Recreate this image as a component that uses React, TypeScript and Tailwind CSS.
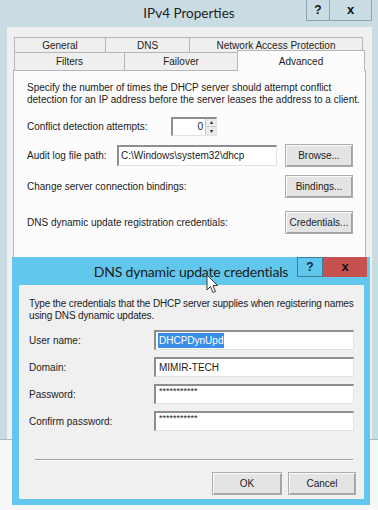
import React from 'react';

const WinButton: React.FC<{ label: string; className?: string }> = ({ label, className = '' }) => (
  <button
    className={`flex items-center justify-center bg-[#e4e4e4] border border-[#acacac] shadow-[inset_1px_1px_0_#fbfbfb,inset_-1px_-1px_0_#a2a2a2] text-[10px] text-[#1b1b1b] ${className}`}
  >
    {label}
  </button>
);

const TextBox: React.FC<{ className?: string; children?: React.ReactNode }> = ({ className = '', children }) => (
  <div
    className={`flex items-center bg-white border-t-2 border-l-2 border-r border-b border-t-[#8e8e8e] border-l-[#8e8e8e] border-r-[#e2e2e2] border-b-[#e2e2e2] pl-[1px] ${className}`}
  >
    {children}
  </div>
);

const Tab: React.FC<{ label: string; className?: string }> = ({ label, className = '' }) => (
  <div className={`flex items-center justify-center border-t border-l border-[#b6b6b6] bg-[#efefef] ${className}`}>
    {label}
  </div>
);

const Cursor = () => (
  <svg width="13" height="20" viewBox="0 0 13 20" className="absolute left-[206px] top-[274px]">
    <path d="M1 1 L1 16 L4.5 12.5 L7 18.5 L9.5 17.5 L7 11.5 L11.5 11.5 Z" fill="#ffffff" stroke="#3a3a3a" strokeWidth="1" strokeLinejoin="round" />
  </svg>
);

const App: React.FC = () => {
  return (
    <div className="relative w-[378px] h-[510px] overflow-hidden bg-[#f7f7f7] font-['Liberation_Sans',Arial,sans-serif] text-[10px] text-[#1b1b1b]">
      {/* IPv4 Properties window (behind) */}
      <div className="h-[440px] bg-[#c9dce4] flex flex-col border-b border-[#a7bac2]">
        <div className="relative h-[27px] flex items-center justify-center">
          <span className="font-['Lato','Noto_Sans',sans-serif] text-[13.5px] text-[#1e1e1e]">IPv4 Properties</span>
          <div className="absolute right-[6px] top-0 flex h-[21px]">
            <div className="w-[24px] flex items-center justify-center border-l border-r border-b border-[#8fa3ac] font-bold text-[12px] text-[#111]">?</div>
            <div className="w-[42px] flex items-center justify-center border-r border-b border-[#8fa3ac] font-bold text-[13px] text-[#111]">x</div>
          </div>
        </div>

        <div className="flex-1 ml-[7px] mr-[6px] bg-[#f0f0f0] pt-[10px] px-[6px] pb-[2px] flex flex-col">
          {/* back tab row */}
          <div className="flex ml-[1px] h-[15px]">
            <Tab label="General" className="w-[91px]" />
            <Tab label="DNS" className="w-[84px]" />
            <Tab label="Network Access Protection" className="w-[174px] border-r" />
          </div>
          {/* front tab row */}
          <div className="flex ml-[1px] h-[18px] items-end">
            <Tab label="Filters" className="w-[110px] h-[18px]" />
            <Tab label="Failover" className="w-[113px] h-[18px]" />
            <div className="relative z-10 w-[128px] h-[21px] -mb-px flex items-center justify-center border-t border-l border-r border-[#b6b6b6] bg-[#fcfcfc]">
              Advanced
            </div>
          </div>

          {/* tab panel */}
          <div className="flex-1 flex flex-col bg-[#fcfcfc] border border-[#b6b6b6] pl-[13px] pr-[12px] pt-[11px]">
            <p className="leading-[12px] whitespace-nowrap">
              Specify the number of times the DHCP server should attempt conflict
              <br />
              detection for an IP address before the server leases the address to a client.
            </p>

            <div className="mt-[10px] h-[20px] flex items-center">
              <span className="w-[144px]">Conflict detection attempts:</span>
              <TextBox className="w-[46px] h-[19px] justify-end">
                <span className="mr-[2px]">0</span>
                <div className="flex flex-col w-[11px] h-full border-l border-[#c8c8c8]">
                  <div className="flex-1 flex items-center justify-center bg-[#ececec] border-b border-[#c8c8c8] text-[6px] leading-none">▴</div>
                  <div className="flex-1 flex items-center justify-center bg-[#ececec] text-[6px] leading-none">▾</div>
                </div>
              </TextBox>
            </div>

            <div className="mt-[8px] h-[23px] flex items-center">
              <span className="w-[90px]">Audit log file path:</span>
              <TextBox className="w-[160px] h-[21px]">
                <span className="ml-[1px] mb-[2px]">C:\Windows\system32\dhcp</span>
              </TextBox>
              <WinButton label="Browse..." className="ml-auto w-[68px] h-[23px]" />
            </div>

            <div className="mt-[8px] h-[23px] flex items-center">
              <span className="flex-1">Change server connection bindings:</span>
              <WinButton label="Bindings..." className="w-[68px] h-[23px]" />
            </div>

            <div className="mt-[13px] h-[23px] flex items-center">
              <span className="flex-1">DNS dynamic update registration credentials:</span>
              <WinButton label="Credentials..." className="w-[68px] h-[23px]" />
            </div>
          </div>
        </div>
      </div>

      {/* DNS dynamic update credentials dialog (on top) */}
      <div className="absolute left-[12px] top-[257px] w-[358px] h-[248px] bg-[#62c7ec] flex flex-col">
        <div className="relative h-[28px] flex items-center justify-center">
          <span className="font-['Lato','Noto_Sans',sans-serif] text-[14px] tracking-[-0.2px] text-[#1a1a1a]">DNS dynamic update credentials</span>
          <div className="absolute right-[3px] top-0 flex h-[20px]">
            <div className="w-[26px] flex items-center justify-center border border-[#3f7c98] font-bold text-[12px] text-[#10283a]">?</div>
            <div className="w-[44px] flex items-center justify-center bg-[#c7514e] font-bold text-[13px] text-[#111]">x</div>
          </div>
        </div>

        <div className="flex-1 ml-[7px] mr-[6px] mb-[6px] bg-[#f0f0f0] pl-[10px] pr-[8px] pt-[13px] flex flex-col">
          <p className="leading-[12px] whitespace-nowrap tracking-[-0.15px]">
            Type the credentials that the DHCP server supplies when registering names
            <br />
            using DNS dynamic updates.
          </p>

          <div className="mt-[8px] h-[20px] flex items-center">
            <span className="w-[125px]">User name:</span>
            <TextBox className="w-[200px] h-[20px]">
              <span className="ml-[1px] px-[1px] bg-[#3a8ee8] text-white leading-[15px]">DHCPDynUpd</span>
            </TextBox>
          </div>
          <div className="mt-[7px] h-[20px] flex items-center">
            <span className="w-[125px]">Domain:</span>
            <TextBox className="w-[200px] h-[20px]">
              <span className="ml-[2px]">MIMIR-TECH</span>
            </TextBox>
          </div>
          <div className="mt-[7px] h-[20px] flex items-center">
            <span className="w-[125px]">Password:</span>
            <TextBox className="w-[200px] h-[20px] items-start">
              <span className="ml-[2px] text-[9px] leading-[10px]">***********</span>
            </TextBox>
          </div>
          <div className="mt-[7px] h-[20px] flex items-center">
            <span className="w-[125px]">Confirm password:</span>
            <TextBox className="w-[200px] h-[20px] items-start">
              <span className="ml-[2px] text-[9px] leading-[10px]">***********</span>
            </TextBox>
          </div>

          <div className="mt-[28px] ml-[6px] w-[318px] h-[2px] border-t border-[#a0a0a0] border-b border-b-white" />

          <div className="mt-[11px] flex justify-end gap-[6px]">
            <WinButton label="OK" className="w-[70px] h-[23px]" />
            <WinButton label="Cancel" className="w-[68px] h-[23px]" />
          </div>
        </div>
      </div>

      <Cursor />
    </div>
  );
};

export default App;
